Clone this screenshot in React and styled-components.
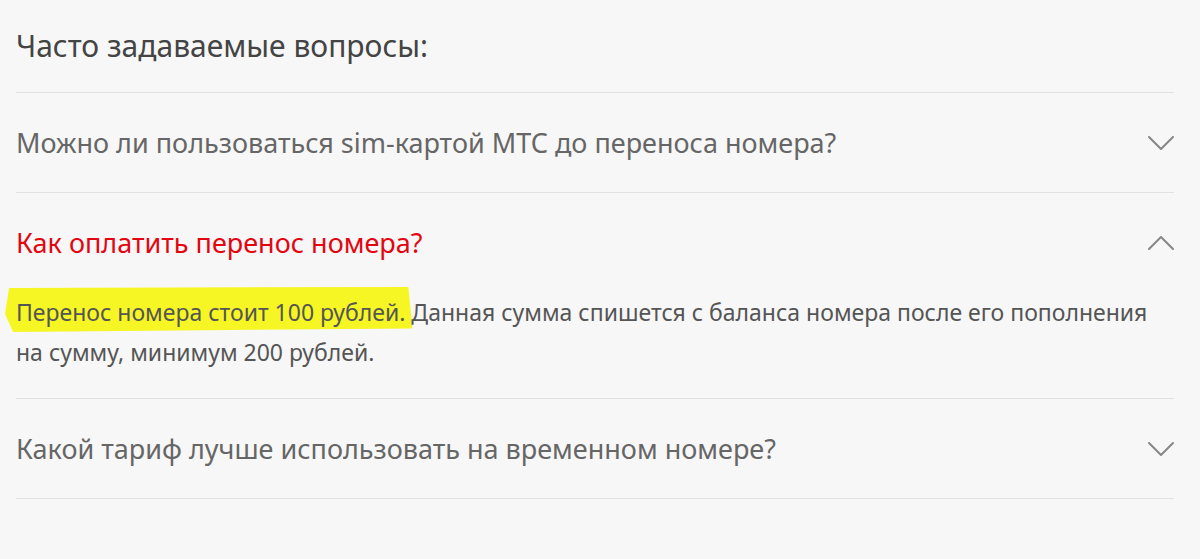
import React from "react";
import styled, { createGlobalStyle } from "styled-components";

const GlobalStyle = createGlobalStyle`
  html, body {
    margin: 0;
    padding: 0;
    background: #f7f7f7;
  }
  body {
    font-family: "Noto Sans", "Open Sans", sans-serif;
  }
`;

const Page = styled.div`
  width: 1200px;
  height: 559px;
  background: #f7f7f7;
  padding: 0 26px 0 16px;
  box-sizing: border-box;
  overflow: hidden;
`;

const Title = styled.h2`
  margin: 0;
  height: 93px;
  display: flex;
  align-items: center;
  padding-bottom: 2px;
  box-sizing: border-box;
  font-size: 30px;
  font-weight: 400;
  color: #444;
  border-bottom: 1px solid #e2e2e2;
`;

const Item = styled.div`
  border-bottom: 1px solid #e2e2e2;
`;

const Question = styled.div`
  height: 99px;
  display: flex;
  align-items: center;
  justify-content: space-between;
  font-size: 27px;
  color: ${({ $open }) => ($open ? "#e30611" : "#666")};
`;

const Chevron = styled.svg`
  width: 26px;
  height: 14px;
  flex: none;
`;

const Answer = styled.div`
  font-size: 23px;
  line-height: 40px;
  color: #555;
  padding-bottom: 26px;
  padding-right: 24px;
`;

const AnswerText = styled.p`
  margin: 0;
  position: relative;
  z-index: 0;
`;

const Highlight = styled.span`
  position: relative;
  &::before {
    content: "";
    position: absolute;
    left: -11px;
    right: -7px;
    top: -9px;
    bottom: -4px;
    background: #f6f624;
    clip-path: polygon(1% 2%, 99% 0, 100% 92%, 2% 100%, 0 60%);
    z-index: -1;
  }
`;

const ChevronIcon = ({ up }) => (
  <Chevron viewBox="0 0 26 14" fill="none">
    <path
      d={up ? "M1 13 L13 1 L25 13" : "M1 1 L13 13 L25 1"}
      stroke="#888"
      strokeWidth="2"
      strokeLinecap="round"
      strokeLinejoin="round"
    />
  </Chevron>
);

const faq = [
  { q: "Можно ли пользоваться sim-картой МТС до переноса номера?" },
  { q: "Как оплатить перенос номера?", open: true },
  { q: "Какой тариф лучше использовать на временном номере?" },
];

export default function App() {
  return (
    <Page>
      <GlobalStyle />
      <Title>Часто задаваемые вопросы:</Title>
      {faq.map((item) => (
        <Item key={item.q}>
          <Question $open={item.open}>
            <span>{item.q}</span>
            <ChevronIcon up={item.open} />
          </Question>
          {item.open && (
            <Answer>
              <AnswerText>
                <Highlight>Перенос номера стоит 100 рублей.</Highlight> Данная
                сумма спишется с баланса номера после его пополнения на сумму,
                минимум 200 рублей.
              </AnswerText>
            </Answer>
          )}
        </Item>
      ))}
    </Page>
  );
}
